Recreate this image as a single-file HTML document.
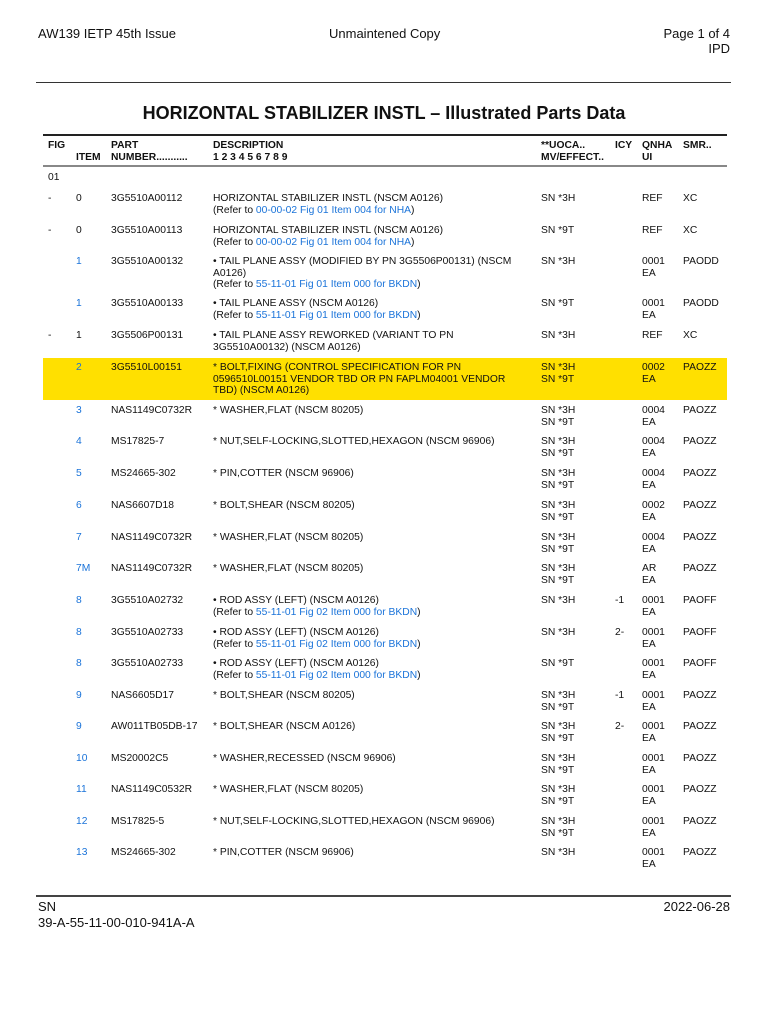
<!DOCTYPE html>
<html><head><meta charset="utf-8"><style>
body{margin:0;width:768px;height:1024px;background:#fff;font-family:"Liberation Sans",Arial,sans-serif;color:#111;position:relative;overflow:hidden}
.a{position:absolute;white-space:nowrap}
.r{position:absolute;left:0;width:768px;font-size:10.3px;line-height:11.5px}
.r div{position:absolute;top:0;white-space:nowrap}
.f{left:48px}.i{left:76px}.p{left:111px}.d{left:213px}.u{left:541px}.c{left:615px}.q{left:642px}.s{left:683px}
.b{color:#1a73d9}
.hl{position:absolute;left:43px;top:358px;width:684px;height:42px;background:#ffe000}
</style></head><body>
<div class="a" style="left:38px;top:26px;font-size:13px">AW139 IETP 45th Issue</div>
<div class="a" style="left:329px;top:26px;font-size:13px">Unmaintened Copy</div>
<div class="a" style="right:38px;top:26px;font-size:13px;text-align:right;line-height:15px">Page 1 of 4<br>IPD</div>
<div class="a" style="left:36px;top:82px;width:695px;height:1px;background:#333"></div>
<div class="a" style="left:0;width:768px;text-align:center;top:103px;font-size:18px;font-weight:bold">HORIZONTAL STABILIZER INSTL – Illustrated Parts Data</div>
<div class="a" style="left:43px;top:134px;width:684px;height:1.5px;background:#222"></div>
<div class="r" style="top:140px;font-weight:bold"><div class="f">FIG</div><div class="i" style="top:12px">ITEM</div><div class="p">PART<br>NUMBER...........</div><div class="d">DESCRIPTION<br>1 2 3 4 5 6 7 8 9</div><div class="u">**UOCA..<br>MV/EFFECT..</div><div class="c">ICY</div><div class="q">QNHA<br>UI</div><div class="s">SMR..</div></div>
<div class="a" style="left:43px;top:165px;width:684px;height:2px;background:#888"></div>
<div class="r" style="top:172px"><div class="f">01</div></div>
<div class="r" style="top:193px"><div class="f">-</div><div class="i">0</div><div class="p">3G5510A00112</div><div class="d">HORIZONTAL STABILIZER INSTL (NSCM A0126)<br>(Refer to <span class="b">00-00-02 Fig 01 Item 004 for NHA</span>)</div><div class="u">SN *3H</div><div class="q">REF</div><div class="s">XC</div></div>
<div class="r" style="top:225px"><div class="f">-</div><div class="i">0</div><div class="p">3G5510A00113</div><div class="d">HORIZONTAL STABILIZER INSTL (NSCM A0126)<br>(Refer to <span class="b">00-00-02 Fig 01 Item 004 for NHA</span>)</div><div class="u">SN *9T</div><div class="q">REF</div><div class="s">XC</div></div>
<div class="r" style="top:256px"><div class="i b">1</div><div class="p">3G5510A00132</div><div class="d">• TAIL PLANE ASSY (MODIFIED BY PN 3G5506P00131) (NSCM<br>A0126)<br>(Refer to <span class="b">55-11-01 Fig 01 Item 000 for BKDN</span>)</div><div class="u">SN *3H</div><div class="q">0001<br>EA</div><div class="s">PAODD</div></div>
<div class="r" style="top:298px"><div class="i b">1</div><div class="p">3G5510A00133</div><div class="d">• TAIL PLANE ASSY (NSCM A0126)<br>(Refer to <span class="b">55-11-01 Fig 01 Item 000 for BKDN</span>)</div><div class="u">SN *9T</div><div class="q">0001<br>EA</div><div class="s">PAODD</div></div>
<div class="r" style="top:330px"><div class="f">-</div><div class="i">1</div><div class="p">3G5506P00131</div><div class="d">• TAIL PLANE ASSY REWORKED (VARIANT TO PN<br>3G5510A00132) (NSCM A0126)</div><div class="u">SN *3H</div><div class="q">REF</div><div class="s">XC</div></div>
<div class="hl"></div>
<div class="r" style="top:362px"><div class="i b">2</div><div class="p">3G5510L00151</div><div class="d">* BOLT,FIXING (CONTROL SPECIFICATION FOR PN<br>0596510L00151 VENDOR TBD OR PN FAPLM04001 VENDOR<br>TBD) (NSCM A0126)</div><div class="u">SN *3H<br>SN *9T</div><div class="q">0002<br>EA</div><div class="s">PAOZZ</div></div>
<div class="r" style="top:405px"><div class="i b">3</div><div class="p">NAS1149C0732R</div><div class="d">* WASHER,FLAT (NSCM 80205)</div><div class="u">SN *3H<br>SN *9T</div><div class="q">0004<br>EA</div><div class="s">PAOZZ</div></div>
<div class="r" style="top:436px"><div class="i b">4</div><div class="p">MS17825-7</div><div class="d">* NUT,SELF-LOCKING,SLOTTED,HEXAGON (NSCM 96906)</div><div class="u">SN *3H<br>SN *9T</div><div class="q">0004<br>EA</div><div class="s">PAOZZ</div></div>
<div class="r" style="top:468px"><div class="i b">5</div><div class="p">MS24665-302</div><div class="d">* PIN,COTTER (NSCM 96906)</div><div class="u">SN *3H<br>SN *9T</div><div class="q">0004<br>EA</div><div class="s">PAOZZ</div></div>
<div class="r" style="top:500px"><div class="i b">6</div><div class="p">NAS6607D18</div><div class="d">* BOLT,SHEAR (NSCM 80205)</div><div class="u">SN *3H<br>SN *9T</div><div class="q">0002<br>EA</div><div class="s">PAOZZ</div></div>
<div class="r" style="top:532px"><div class="i b">7</div><div class="p">NAS1149C0732R</div><div class="d">* WASHER,FLAT (NSCM 80205)</div><div class="u">SN *3H<br>SN *9T</div><div class="q">0004<br>EA</div><div class="s">PAOZZ</div></div>
<div class="r" style="top:563px"><div class="i b">7M</div><div class="p">NAS1149C0732R</div><div class="d">* WASHER,FLAT (NSCM 80205)</div><div class="u">SN *3H<br>SN *9T</div><div class="q">AR<br>EA</div><div class="s">PAOZZ</div></div>
<div class="r" style="top:595px"><div class="i b">8</div><div class="p">3G5510A02732</div><div class="d">• ROD ASSY (LEFT) (NSCM A0126)<br>(Refer to <span class="b">55-11-01 Fig 02 Item 000 for BKDN</span>)</div><div class="u">SN *3H</div><div class="c">-1</div><div class="q">0001<br>EA</div><div class="s">PAOFF</div></div>
<div class="r" style="top:627px"><div class="i b">8</div><div class="p">3G5510A02733</div><div class="d">• ROD ASSY (LEFT) (NSCM A0126)<br>(Refer to <span class="b">55-11-01 Fig 02 Item 000 for BKDN</span>)</div><div class="u">SN *3H</div><div class="c">2-</div><div class="q">0001<br>EA</div><div class="s">PAOFF</div></div>
<div class="r" style="top:658px"><div class="i b">8</div><div class="p">3G5510A02733</div><div class="d">• ROD ASSY (LEFT) (NSCM A0126)<br>(Refer to <span class="b">55-11-01 Fig 02 Item 000 for BKDN</span>)</div><div class="u">SN *9T</div><div class="q">0001<br>EA</div><div class="s">PAOFF</div></div>
<div class="r" style="top:690px"><div class="i b">9</div><div class="p">NAS6605D17</div><div class="d">* BOLT,SHEAR (NSCM 80205)</div><div class="u">SN *3H<br>SN *9T</div><div class="c">-1</div><div class="q">0001<br>EA</div><div class="s">PAOZZ</div></div>
<div class="r" style="top:721px"><div class="i b">9</div><div class="p">AW011TB05DB-17</div><div class="d">* BOLT,SHEAR (NSCM A0126)</div><div class="u">SN *3H<br>SN *9T</div><div class="c">2-</div><div class="q">0001<br>EA</div><div class="s">PAOZZ</div></div>
<div class="r" style="top:753px"><div class="i b">10</div><div class="p">MS20002C5</div><div class="d">* WASHER,RECESSED (NSCM 96906)</div><div class="u">SN *3H<br>SN *9T</div><div class="q">0001<br>EA</div><div class="s">PAOZZ</div></div>
<div class="r" style="top:784px"><div class="i b">11</div><div class="p">NAS1149C0532R</div><div class="d">* WASHER,FLAT (NSCM 80205)</div><div class="u">SN *3H<br>SN *9T</div><div class="q">0001<br>EA</div><div class="s">PAOZZ</div></div>
<div class="r" style="top:816px"><div class="i b">12</div><div class="p">MS17825-5</div><div class="d">* NUT,SELF-LOCKING,SLOTTED,HEXAGON (NSCM 96906)</div><div class="u">SN *3H<br>SN *9T</div><div class="q">0001<br>EA</div><div class="s">PAOZZ</div></div>
<div class="r" style="top:847px"><div class="i b">13</div><div class="p">MS24665-302</div><div class="d">* PIN,COTTER (NSCM 96906)</div><div class="u">SN *3H</div><div class="q">0001<br>EA</div><div class="s">PAOZZ</div></div>
<div class="a" style="left:36px;top:895px;width:695px;height:1.5px;background:#444"></div>
<div class="a" style="left:38px;top:899px;font-size:13px;line-height:16px">SN<br>39-A-55-11-00-010-941A-A</div>
<div class="a" style="right:38px;top:899px;font-size:13px;line-height:16px">2022-06-28</div>
</body></html>
